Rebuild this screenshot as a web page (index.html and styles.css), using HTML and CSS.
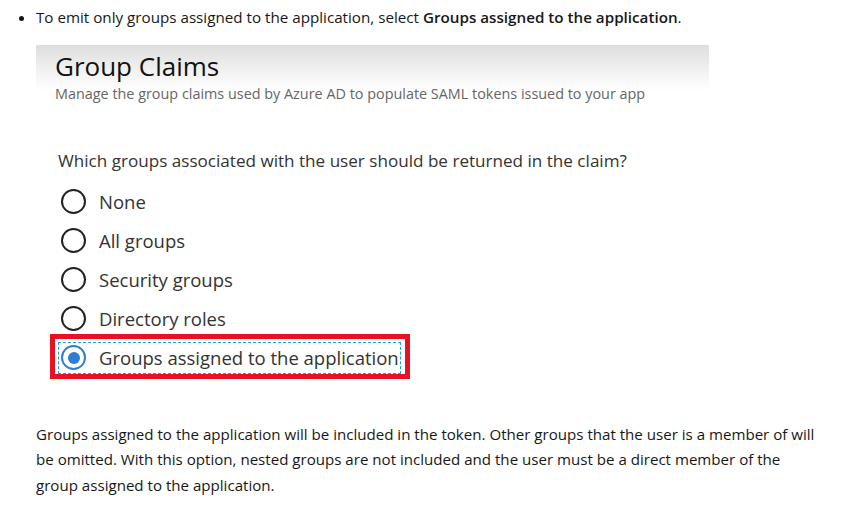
FILE: index.html
```html
<!DOCTYPE html>
<html>
<head>
<meta charset="utf-8">
<link rel="stylesheet" href="styles.css">
</head>
<body>
<ul class="steps">
  <li>To emit only groups assigned to the application, select <strong>Groups assigned to the application</strong>.</li>
</ul>
<div class="shot">
  <div class="shot-head">
    <h1 class="title">Group Claims</h1>
    <p class="subtitle">Manage the group claims used by Azure AD to populate SAML tokens issued to your app</p>
  </div>
  <p class="question">Which groups associated with the user should be returned in the claim?</p>
  <div class="options">
    <div class="option"><span class="radio"></span><span class="label">None</span></div>
    <div class="option"><span class="radio"></span><span class="label">All groups</span></div>
    <div class="option"><span class="radio"></span><span class="label">Security groups</span></div>
    <div class="option"><span class="radio"></span><span class="label">Directory roles</span></div>
    <div class="highlight">
      <div class="option focus"><span class="radio checked"></span><span class="label">Groups assigned to the application</span></div>
    </div>
  </div>
</div>
<p class="note">Groups assigned to the application will be included in the token. Other groups that the user is a member of will be omitted. With this option, nested groups are not included and the user must be a direct member of the group assigned to the application.</p>
</body>
</html>
```
FILE: styles.css
```css
* { box-sizing: border-box; }
body {
  margin: 0;
  background: #fff;
  font-family: "Open Sans", "Noto Sans", sans-serif;
  color: #171717;
}
.steps {
  margin: 0;
  padding: 7px 0 0 36px;
  font-size: 15.2px;
  line-height: 21px;
}
.steps strong { font-weight: 600; }
.shot {
  margin: 17px 0 0 36px;
  width: 673px;
}
.shot-head {
  padding: 6px 0 0 19px;
  height: 65px;
  background: linear-gradient(#dedede, #f4f4f4 45%, #fff 70%);
}
.title {
  margin: 0;
  font-size: 26px;
  line-height: 31px;
  font-weight: 500;
  color: #111;
}
.subtitle {
  margin: 2px 0 0;
  font-size: 14.4px;
  line-height: 19px;
  color: #666;
}
.question {
  margin: 40px 0 0 22px;
  font-size: 17.1px;
  line-height: 22px;
  color: #333;
}
.options {
  margin: 10px 0 0 14px;
  display: flex;
  flex-direction: column;
}
.option {
  display: flex;
  align-items: center;
  height: 39px;
  padding-left: 11px;
}
.radio {
  width: 25px;
  height: 25px;
  border: 2px solid #222;
  border-radius: 50%;
  margin-right: 13px;
  flex: none;
  position: relative;
}
.radio.checked { border-color: #2f7dd6; }
.radio.checked::after {
  content: "";
  position: absolute;
  left: 4.5px;
  top: 4.5px;
  width: 12px;
  height: 12px;
  border-radius: 50%;
  background: #2f7dd6;
}
.label {
  font-size: 18.5px;
  color: #333;
  white-space: nowrap;
}
.highlight {
  align-self: flex-start;
  border: 5px solid #e81123;
  padding: 4px 5px 1px 4px;
  margin-top: -4.5px;
}
.highlight .option {
  height: 30px;
  padding-left: 2px;
  padding-right: 1px;
  outline: 1px dashed #25a0da;
  outline-offset: 0;
}
.note {
  margin: 43px 0 0 36px;
  width: 784px;
  font-size: 15.1px;
  line-height: 25.5px;
  color: #171717;
}
```
